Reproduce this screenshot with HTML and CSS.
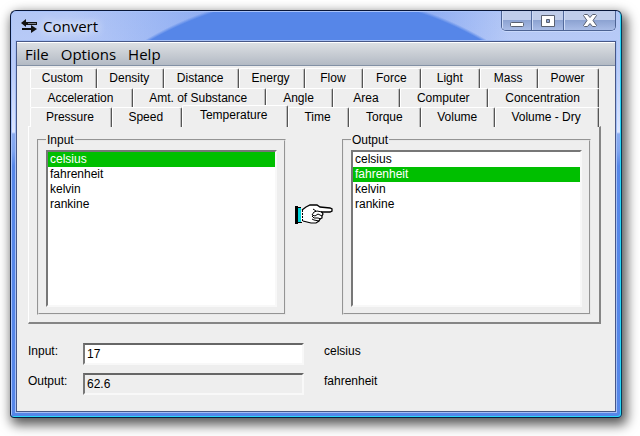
FILE: index.html
```html
<!DOCTYPE html>
<html lang="en">
<head>
<meta charset="utf-8">
<title>Convert</title>
<link rel="stylesheet" href="styles.css">
</head>
<body>
<main class="window">
  <header class="titlebar">
    <svg class="app-icon" width="17" height="15" viewBox="0 0 17 15" aria-hidden="true">
      <path d="M0 4 5 0v3h11v3H5v2z" fill="#111"/>
      <path d="M1 9h9V6l6 4-6 4v-3H1z" fill="#111"/>
      <path d="M7 4.500h8" stroke="#7d828c"/>
    </svg>
    <h1 class="title">Convert</h1>
    <div class="controls">
      <button class="control" type="button" aria-label="Minimize">
        <svg width="16" height="16" viewBox="0 0 16 16"><rect x="1.500" y="9.500" width="13" height="4" rx="1" fill="#fff" stroke="#596071"/></svg>
      </button>
      <button class="control" type="button" aria-label="Maximize">
        <svg width="16" height="16" viewBox="0 0 16 16"><path d="M1.500 2.500h13v11h-13zM6.500 6.500h3v3h-3z" fill="#fff" fill-rule="evenodd" stroke="#596071"/></svg>
      </button>
      <button class="control control-close" type="button" aria-label="Close">
        <svg width="16" height="16" viewBox="0 0 16 16"><path d="m1.500 2.500 1-1h3L8 4.500l2.500-3h3l1 1-3.500 5 3.500 5-1 1h-3L8 10.500l-2.500 3h-3l-1-1 3.500-5z" fill="#fff" stroke="#596071" stroke-linejoin="round"/></svg>
      </button>
    </div>
  </header>
  <div class="client">
    <nav class="menubar">
      <button type="button">File</button>
      <button type="button">Options</button>
      <button type="button">Help</button>
    </nav>
    <div class="content">
      <div class="tabs" role="tablist">
        <div class="tab-row row-one">
          <button role="tab">Custom</button><button role="tab">Density</button><button role="tab">Distance</button><button role="tab">Energy</button><button role="tab">Flow</button><button role="tab">Force</button><button role="tab">Light</button><button role="tab">Mass</button><button role="tab">Power</button>
        </div>
        <div class="tab-row row-two">
          <button role="tab">Acceleration</button><button role="tab">Amt. of Substance</button><button role="tab">Angle</button><button role="tab">Area</button><button role="tab">Computer</button><button role="tab">Concentration</button>
        </div>
        <div class="tab-row row-three">
          <button role="tab">Pressure</button><button role="tab">Speed</button><button role="tab" aria-selected="true">Temperature</button><button role="tab">Time</button><button role="tab">Torque</button><button role="tab">Volume</button><button role="tab">Volume - Dry</button>
        </div>
      </div>
      <section class="panel" role="tabpanel" aria-label="Temperature">
        <fieldset class="group">
          <legend>Input</legend>
          <select class="units" size="10" aria-label="Input">
            <option selected>celsius</option>
            <option>fahrenheit</option>
            <option>kelvin</option>
            <option>rankine</option>
          </select>
        </fieldset>
        <svg class="hand" width="38" height="21" viewBox="0 0 38 21" aria-hidden="true">
          <path d="M3 3h3v15H3z" fill="#00d5dc"/>
          <path d="M0 2h3v18H0z" fill="#000"/>
          <path d="M3 3.500h3M3 18.500h4" stroke="#000"/>
          <path d="M7 6 11 3l4-2h7l3 2 10 1 2 1v2l-2 1-8 1-1 2v3l-2 2-2 2-3 1h-5l-4-1-4-2z" fill="#fff"/>
          <path d="M7 6 11 3l4-2h7l3 2 10 1 2 1v2l-2 1-9 0" fill="none" stroke="#000" stroke-width="1.300"/>
          <path d="m27 8 1 2-1 2v2l-2 1-1 2-3 2h-5l-4-1-4-1" fill="none" stroke="#000" stroke-width="1.200"/>
          <path d="m27 8-5-1-3 1-2 3 3 1 3-2 4 2M17 12l2 2 4 0 3 1M17 15l2 1 5 1M21 7l-3-2" fill="none" stroke="#000"/>
          <path d="M7.500 6v12" stroke="#000" stroke-dasharray="2 1"/>
        </svg>
        <fieldset class="group">
          <legend>Output</legend>
          <select class="units" size="10" aria-label="Output">
            <option>celsius</option>
            <option selected>fahrenheit</option>
            <option>kelvin</option>
            <option>rankine</option>
          </select>
        </fieldset>
      </section>
      <form class="values">
        <label for="in">Input:</label>
        <input id="in" type="text" value="17">
        <span>celsius</span>
        <label for="out">Output:</label>
        <input id="out" type="text" value="62.6" readonly>
        <span>fahrenheit</span>
      </form>
    </div>
  </div>
</main>
</body>
</html>
```
FILE: styles.css
```css
* { box-sizing: border-box; }

body {
  margin: 0;
  padding: 10px 18px 18px 10px;
  background: #fff;
  color: #000;
  font: 12px/15px "Liberation Sans", Arial, sans-serif;
}

button, input, select { font: inherit; color: inherit; }

.window {
  padding: 0 5px 5px;
  border: 1px solid #081638;
  border-right-color: #063b58;
  border-bottom-color: #061c40;
  border-radius: 6px 6px 4px 4px;
  background:
    radial-gradient(circle 336px at 50% 318px, #5686e8 99%, transparent 100%),
    linear-gradient(90deg, transparent 0, transparent 60px, rgba(110, 150, 240, 0.5) 190px, rgba(110, 150, 240, 0.5) 420px, transparent 500px) 0 0 / 100% 31px no-repeat,
    linear-gradient(#b3c7f5 0, #bccdf8 60px, #dbe5ff 121px, #8dadf0 123px, #7fa4ef 140px, #5686e8 155px);
  box-shadow:
    inset -1px -1px 0 #28d8f8,
    inset 1px 1px 0 #a9c3fa,
    3px 5px 12px 2px rgba(0, 0, 0, 0.65);
}

.titlebar {
  display: flex;
  align-items: center;
  height: 30px;
  padding-left: 5px;
}

.title {
  flex: 1;
  margin: 0 0 0 5px;
  font: 15px/20px "Open Sans", "Noto Sans", sans-serif;
  text-shadow: 0 0 8px #fff, 0 0 12px #fff;
}

.controls {
  display: flex;
  align-self: flex-start;
  height: 20px;
  border: 1px solid #4d6393;
  border-top: 0;
  border-radius: 0 0 5px 5px;
  box-shadow: 0 1px 0 #c8d8fb;
  overflow: hidden;
}

.control {
  display: grid;
  place-items: center;
  width: 30px;
  padding: 0;
  border: 0;
  border-right: 1px solid #536a9c;
  background: linear-gradient(#c0cdea 0 45%, #8da3d2 50%, #a9bce6);
  box-shadow: inset 1px 0 0 #cfdcf7;
}

.control + .control { width: 32px; }
.control.control-close { width: 51px; border-right: 0; }

.client {
  border: 1px solid #475787;
  box-shadow: 0 0 0 1px #a5bff6;
  background: #eee;
}

.menubar {
  display: flex;
  gap: 12px;
  height: 24px;
  padding-left: 8px;
  border-top: 1px solid #fff;
  border-bottom: 1px solid #8391a5;
  background: linear-gradient(#dcdfe3, #b3bac4);
}

.menubar button {
  padding: 0;
  border: 0;
  background: none;
  font: 15px/22px "Open Sans", "Noto Sans", sans-serif;
}

.content { padding: 2px 14px 16px 11px; }

.tabs { padding: 0 2px; }

.tab-row { display: grid; height: 19px; }
.row-one { height: 20px; grid-template-columns: 67fr 67fr 75fr 66fr 59fr 58fr 59fr 58fr 61fr; }
.row-two { grid-template-columns: 103fr 133fr 68fr 67fr 88fr 111fr; }
.row-three { grid-template-columns: 82fr 70fr 106fr 62fr 72fr 74fr 104fr; }

.tab-row button {
  padding: 0 2px 0 0;
  border: 1px solid #fff;
  border-right: 1px solid #555;
  border-bottom: 0;
  border-radius: 2px 2px 0 0;
  background: #eee;
  box-shadow: inset -1px 0 0 #bbb;
  white-space: nowrap;
}

.tab-row button[aria-selected="true"] {
  z-index: 1;
  height: 22px;
  margin-top: -2px;
  padding-bottom: 2px;
}

.panel {
  display: flex;
  align-items: center;
  padding: 6px 8px 7px;
  border: 1px solid #fff;
  border-right: 2px solid #858585;
  border-bottom: 2px solid #858585;
}

.group {
  flex: 1;
  min-width: 0;
  margin: 0;
  padding: 3px 7px 6px;
  border: 2px groove #e8e8e8;
}

.group legend {
  margin-left: 0;
  padding: 0 1px;
  line-height: 14px;
}

.units {
  display: block;
  width: 100%;
  height: 157px;
  padding: 0;
  border: 2px solid;
  border-color: #777 #f8f8f8 #f8f8f8 #777;
  border-radius: 0;
  background: #fff;
  overflow: hidden;
  scrollbar-width: none;
}

.units option {
  min-height: 15px;
  padding: 0 2px;
  line-height: 15px;
}

.units option:checked {
  background: #00bf00 linear-gradient(#00bf00, #00bf00);
  color: #fff;
}

.hand { flex: none; margin: 0 9px 20px; }

.values {
  display: grid;
  grid-template-columns: 55px 221px 1fr;
  row-gap: 8px;
  margin-top: 19px;
}

.values label, .values span { padding-top: 1px; }
.values span { padding-left: 20px; }

.values input {
  width: 100%;
  height: 22px;
  padding: 1px 2px;
  border: 2px solid;
  border-color: #666 #f8f8f8 #f8f8f8 #777;
  background: #fff;
}

.values input[readonly] { background: #eee; }
```
